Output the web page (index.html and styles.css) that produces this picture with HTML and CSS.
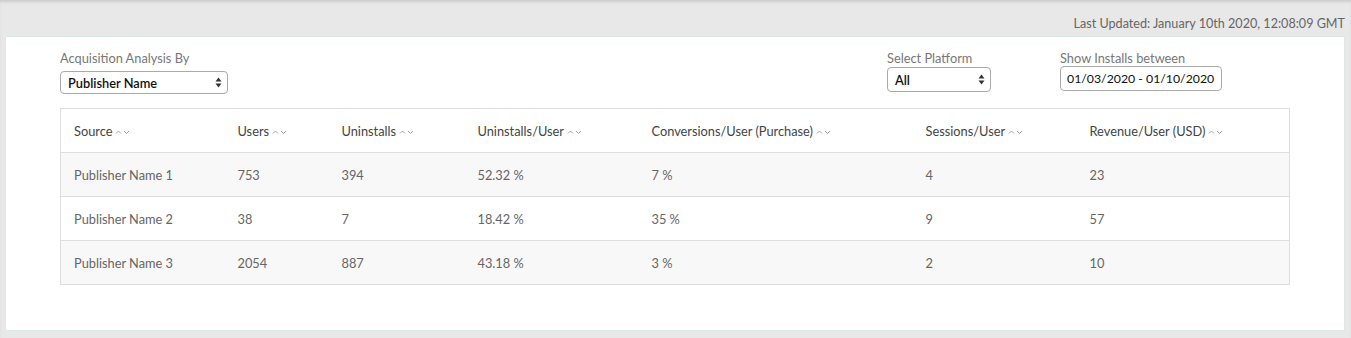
FILE: index.html
```html
<!DOCTYPE html>
<html>
<head>
<meta charset="utf-8">
<link rel="stylesheet" href="styles.css">
</head>
<body>
<div class="page">
  <div class="updated">Last Updated: January 10th 2020, 12:08:09 GMT</div>
  <div class="card">
    <div class="filters">
      <div class="field analysis">
        <label>Acquisition Analysis By</label>
        <div class="select wide"><span>Publisher Name</span><svg class="arrows" width="7" height="11" viewBox="0 0 7 11"><path d="M3.5 0.5 L6.5 4.5 L0.5 4.5 Z M3.5 10.5 L6.5 6.5 L0.5 6.5 Z" fill="#333"/></svg></div>
      </div>
      <div class="spacer"></div>
      <div class="field platform">
        <label>Select Platform</label>
        <div class="select narrow"><span>All</span><svg class="arrows" width="7" height="11" viewBox="0 0 7 11"><path d="M3.5 0.5 L6.5 4.5 L0.5 4.5 Z M3.5 10.5 L6.5 6.5 L0.5 6.5 Z" fill="#333"/></svg></div>
      </div>
      <div class="field dates">
        <label>Show Installs between</label>
        <div class="dateinput">01/03/2020 - 01/10/2020</div>
      </div>
    </div>
    <table class="grid">
      <colgroup>
        <col class="c1"><col class="c2"><col class="c3"><col class="c4"><col class="c5"><col class="c6"><col>
      </colgroup>
      <thead>
        <tr>
          <th>Source<svg class="sort" width="16" height="8" viewBox="0 0 16 8"><path d="M2 5.5 L4.5 3 L7 5.5 M10 3 L12.5 5.5 L15 3" fill="none" stroke="#999" stroke-width="0.9"/></svg></th>
          <th>Users<svg class="sort" width="16" height="8" viewBox="0 0 16 8"><path d="M2 5.5 L4.5 3 L7 5.5 M10 3 L12.5 5.5 L15 3" fill="none" stroke="#999" stroke-width="0.9"/></svg></th>
          <th>Uninstalls<svg class="sort" width="16" height="8" viewBox="0 0 16 8"><path d="M2 5.5 L4.5 3 L7 5.5 M10 3 L12.5 5.5 L15 3" fill="none" stroke="#999" stroke-width="0.9"/></svg></th>
          <th>Uninstalls/User<svg class="sort" width="16" height="8" viewBox="0 0 16 8"><path d="M2 5.5 L4.5 3 L7 5.5 M10 3 L12.5 5.5 L15 3" fill="none" stroke="#999" stroke-width="0.9"/></svg></th>
          <th>Conversions/User (Purchase)<svg class="sort" width="16" height="8" viewBox="0 0 16 8"><path d="M2 5.5 L4.5 3 L7 5.5 M10 3 L12.5 5.5 L15 3" fill="none" stroke="#999" stroke-width="0.9"/></svg></th>
          <th>Sessions/User<svg class="sort" width="16" height="8" viewBox="0 0 16 8"><path d="M2 5.5 L4.5 3 L7 5.5 M10 3 L12.5 5.5 L15 3" fill="none" stroke="#999" stroke-width="0.9"/></svg></th>
          <th>Revenue/User (USD)<svg class="sort" width="16" height="8" viewBox="0 0 16 8"><path d="M2 5.5 L4.5 3 L7 5.5 M10 3 L12.5 5.5 L15 3" fill="none" stroke="#999" stroke-width="0.9"/></svg></th>
        </tr>
      </thead>
      <tbody>
        <tr class="odd"><td>Publisher Name 1</td><td>753</td><td>394</td><td>52.32 %</td><td>7 %</td><td>4</td><td>23</td></tr>
        <tr><td>Publisher Name 2</td><td>38</td><td>7</td><td>18.42 %</td><td>35 %</td><td>9</td><td>57</td></tr>
        <tr class="odd"><td>Publisher Name 3</td><td>2054</td><td>887</td><td>43.18 %</td><td>3 %</td><td>2</td><td>10</td></tr>
      </tbody>
    </table>
  </div>
</div>
</body>
</html>
```
FILE: styles.css
```css
* { box-sizing: border-box; }
html, body { margin: 0; padding: 0; }
body {
  background: #e8e8e8;
  font-family: Lato, "Open Sans", sans-serif;
  height: 338px;
  overflow: hidden;
}
.page {
  padding: 0 6px 0 5px;
  box-shadow: inset 0 3px 3px -1px rgba(0,0,0,0.12);
  height: 338px;
}
.updated {
  text-align: right;
  font-size: 12.6px;
  color: #666;
  height: 36px;
  padding-top: 16px;
  line-height: 15px;
}
.card {
  background: #fff;
  border: 1px solid #dbe9e4;
  height: 295px;
  padding: 13px 54px 0 54px;
}
.filters {
  display: flex;
  align-items: flex-start;
  height: 58px;
}
.spacer { flex: 1; }
.field label {
  display: block;
  font-size: 12.8px;
  color: #777;
  line-height: 16px;
}
.select {
  display: flex;
  align-items: center;
  justify-content: space-between;
  border: 1px solid #a9a9a9;
  border-radius: 4px;
  height: 23px;
  padding: 0 5px 0 7px;
  font-size: 12.8px;
  color: #111;
  font-weight: 600;
  background: #fff;
}
.analysis .select { margin-top: 5px; }
.select.wide { width: 168px; }
.select.narrow { width: 104px; height: 25px; margin-top: 1px; }
.platform { width: 173px; }
.dates { width: 230px; }
.dateinput {
  border: 1px solid #a9a9a9;
  border-radius: 4px;
  width: 162px;
  height: 25px;
  font-size: 12.3px;
  color: #111;
  padding: 0 6px;
  line-height: 23px;
  white-space: nowrap;
}
.grid {
  border-collapse: collapse;
  width: 1230px;
  table-layout: fixed;
  border: 1px solid #dedede;
}
.c1 { width: 164px; }
.c2 { width: 104px; }
.c3 { width: 136px; }
.c4 { width: 174px; }
.c5 { width: 274px; }
.c6 { width: 164px; }
.grid th, .grid td {
  text-align: left;
  padding: 0 0 0 13px;
  height: 44px;
  font-size: 12.8px;
  white-space: nowrap;
  font-weight: normal;
}
.grid th {
  color: #444;
  border-bottom: 1px solid #dedede;
}
.grid td {
  color: #666;
  border-bottom: 1px solid #dedede;
}
.grid tr.odd td { background: #f8f8f8; }
.sort {
  display: inline-block;
  vertical-align: middle;
  margin-left: 2px;
}
```
